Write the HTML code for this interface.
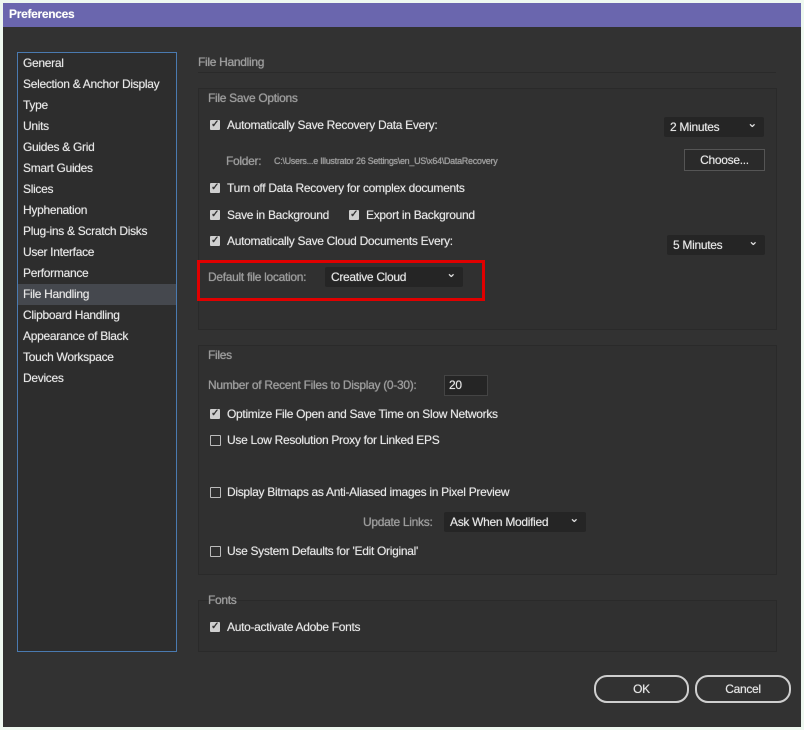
<!DOCTYPE html><html><head><style>
body{margin:0;width:804px;height:730px;background:#eef8f0;font-family:"Liberation Sans",sans-serif;font-size:12px;color:#e6e6e6;overflow:hidden;letter-spacing:-0.3px;text-shadow:0 0 0.6px #ccc}
.win{position:absolute;left:3px;top:3px;width:798px;height:724px;background:#323232}
.title{position:absolute;left:3px;top:3px;width:798px;height:24px;background:#6a66ae;color:#fff;font-weight:bold;font-size:12px;line-height:22px;text-indent:6px}
.a{position:absolute;white-space:nowrap}
.side{position:absolute;left:17px;top:52px;width:158px;height:598px;border:1px solid #4a7ab0;background:#2d2d2d}
.side div{height:21px;line-height:21px;padding-left:5px}
.sel{background:#45484e}
.box{position:absolute;border:1px solid #2a2a2a;background:#303030}
.cb{position:absolute;width:10px;height:10px;background:#cfcfcf;border-radius:1px;color:#333;font-size:10px;line-height:10px;text-align:center;font-weight:bold;text-shadow:none}
.cbo{position:absolute;width:9px;height:9px;border:1px solid #bbb;border-radius:1px}
.dd{position:absolute;background:#252525;height:20px;line-height:20px;padding-left:6px;border-radius:2px}
.dd:after{content:"⌄";position:absolute;right:7px;top:-4px;font-size:12px}
.gray{color:#9a9a9a}
.btn{position:absolute;height:24px;border:2px solid #cfcfcf;border-radius:13px;text-align:center;line-height:24px}
</style></head><body>
<div class="win"></div><div class="title">Preferences</div>
<div class="side">
<div>General</div><div>Selection &amp; Anchor Display</div><div>Type</div><div>Units</div><div>Guides &amp; Grid</div><div>Smart Guides</div><div>Slices</div><div>Hyphenation</div><div>Plug-ins &amp; Scratch Disks</div><div>User Interface</div><div>Performance</div><div class="sel">File Handling</div><div>Clipboard Handling</div><div>Appearance of Black</div><div>Touch Workspace</div><div>Devices</div></div>
<div class="a gray" style="left:198px;top:55px">File Handling</div>
<div class="a" style="left:198px;top:72px;width:578px;height:1px;background:#2a2a2a"></div>
<div class="box" style="left:198px;top:88px;width:577px;height:240px"></div>
<div class="a gray" style="left:208px;top:91px">File Save Options</div>
<div class="cb" style="left:210px;top:120px">✓</div><div class="a" style="left:227px;top:118px">Automatically Save Recovery Data Every:</div>
<div class="dd" style="left:664px;top:117px;width:94px">2 Minutes</div>
<div class="a gray" style="left:226px;top:154px">Folder:</div><div class="a gray" style="left:274px;top:156px;font-size:9px">C:\Users...e Illustrator 26 Settings\en_US\x64\DataRecovery</div>
<div class="a" style="left:684px;top:149px;width:79px;height:20px;border:1px solid #555;background:#2a2a2a;text-align:center;line-height:20px">Choose...</div>
<div class="cb" style="left:210px;top:183px">✓</div><div class="a" style="left:227px;top:181px">Turn off Data Recovery for complex documents</div>
<div class="cb" style="left:210px;top:210px">✓</div><div class="a" style="left:227px;top:208px">Save in Background</div>
<div class="cb" style="left:349px;top:210px">✓</div><div class="a" style="left:366px;top:208px">Export in Background</div>
<div class="cb" style="left:210px;top:236px">✓</div><div class="a" style="left:227px;top:234px">Automatically Save Cloud Documents Every:</div>
<div class="dd" style="left:667px;top:235px;width:92px">5 Minutes</div>
<div class="a" style="left:197px;top:260px;width:282px;height:35px;border:3px solid #e00000"></div>
<div class="a gray" style="left:208px;top:270px">Default file location:</div>
<div class="dd" style="left:325px;top:267px;width:132px">Creative Cloud</div>
<div class="box" style="left:198px;top:345px;width:577px;height:228px"></div>
<div class="a gray" style="left:208px;top:348px">Files</div>
<div class="a gray" style="left:208px;top:378px">Number of Recent Files to Display (0-30):</div>
<div class="a" style="left:444px;top:375px;width:42px;height:19px;background:#252525;border:1px solid #444;line-height:19px;text-indent:4px">20</div>
<div class="cb" style="left:210px;top:409px">✓</div><div class="a" style="left:227px;top:407px">Optimize File Open and Save Time on Slow Networks</div>
<div class="cbo" style="left:210px;top:435px"></div><div class="a" style="left:227px;top:433px">Use Low Resolution Proxy for Linked EPS</div>
<div class="cbo" style="left:210px;top:487px"></div><div class="a" style="left:227px;top:485px">Display Bitmaps as Anti-Aliased images in Pixel Preview</div>
<div class="a gray" style="left:363px;top:515px">Update Links:</div>
<div class="dd" style="left:444px;top:512px;width:136px">Ask When Modified</div>
<div class="cbo" style="left:210px;top:546px"></div><div class="a" style="left:227px;top:544px">Use System Defaults for 'Edit Original'</div>
<div class="box" style="left:198px;top:600px;width:577px;height:50px"></div>
<div class="a gray" style="left:208px;top:593px">Fonts</div>
<div class="cb" style="left:210px;top:622px">✓</div><div class="a" style="left:227px;top:620px">Auto-activate Adobe Fonts</div>
<div class="btn" style="left:594px;top:675px;width:91px">OK</div>
<div class="btn" style="left:695px;top:675px;width:92px">Cancel</div>
</body></html>
